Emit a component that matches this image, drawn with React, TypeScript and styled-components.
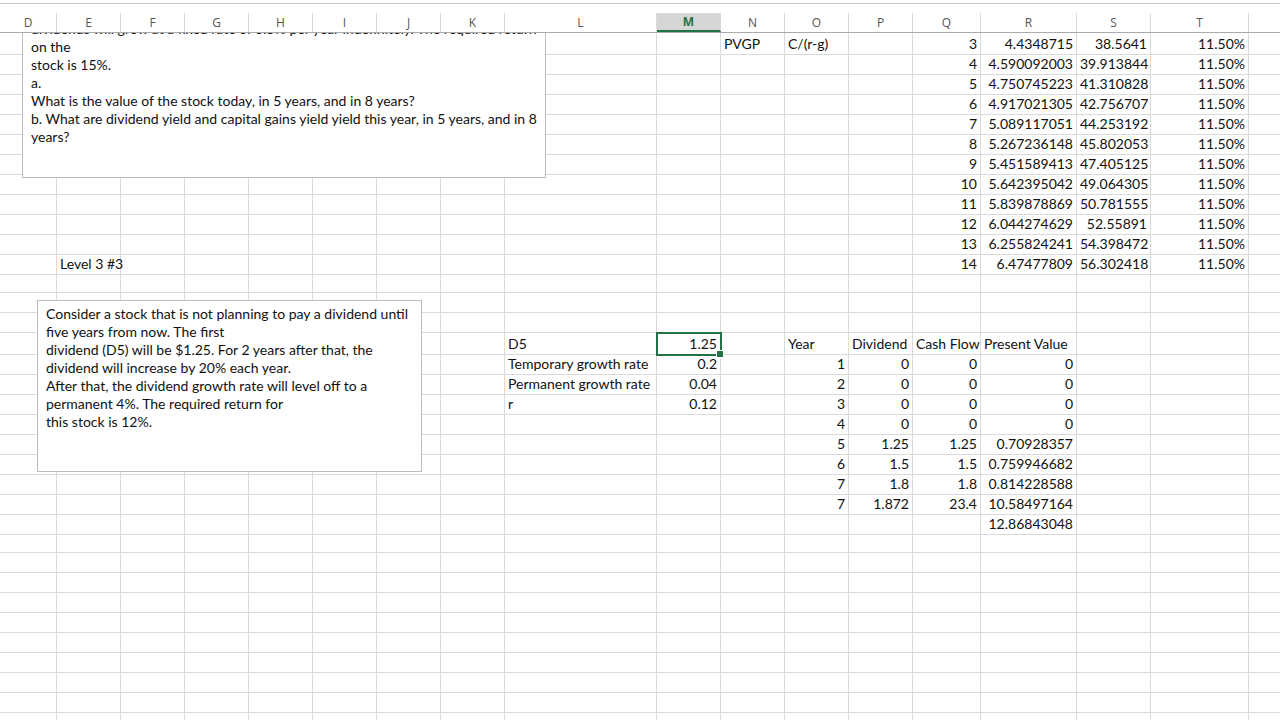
import React from "react";
import styled, { createGlobalStyle } from "styled-components";

const Global = createGlobalStyle`
  html, body { margin: 0; padding: 0; background: #fff; overflow: hidden; }
  body { font-family: Lato, "Open Sans", sans-serif; }
`;

const COLS = [
  { n: "D", w: 57 }, { n: "E", w: 64 }, { n: "F", w: 64 }, { n: "G", w: 64 },
  { n: "H", w: 64 }, { n: "I", w: 64 }, { n: "J", w: 64 }, { n: "K", w: 64 },
  { n: "L", w: 152 }, { n: "M", w: 64 }, { n: "N", w: 64 }, { n: "O", w: 64 },
  { n: "P", w: 64 }, { n: "Q", w: 68 }, { n: "R", w: 96 }, { n: "S", w: 74 },
  { n: "T", w: 98 }, { n: "", w: 40 },
];
const TEMPLATE = COLS.map((c) => `${c.w}px`).join(" ");
const NROWS = 35;

type Cell = { v: string; a?: "l" | "r" };
const data: Record<string, Cell> = {};
const put = (r: number, c: string, v: string, a: "l" | "r" = "l") => {
  data[`${r}${c}`] = { v, a };
};

put(0, "N", "PVGP");
put(0, "O", "C/(r-g)");
const rs = ["4.4348715","4.590092003","4.750745223","4.917021305","5.089117051","5.267236148","5.451589413","5.642395042","5.839878869","6.044274629","6.255824241","6.47477809"];
const ss = ["38.5641","39.913844","41.310828","42.756707","44.253192","45.802053","47.405125","49.064305","50.781555","52.55891","54.398472","56.302418"];
rs.forEach((v, i) => {
  put(i, "Q", String(i + 3), "r");
  put(i, "R", v, "r");
  put(i, "S", ss[i], "r");
  put(i, "T", "11.50%", "r");
});
put(11, "E", "Level 3 #3");
put(15, "L", "D5"); put(15, "M", "1.25", "r");
put(15, "O", "Year"); put(15, "P", "Dividend"); put(15, "Q", "Cash Flow"); put(15, "R", "Present Value");
put(16, "L", "Temporary growth rate"); put(16, "M", "0.2", "r");
put(17, "L", "Permanent growth rate"); put(17, "M", "0.04", "r");
put(18, "L", "r"); put(18, "M", "0.12", "r");
const tbl: [string, string, string, string][] = [
  ["1","0","0","0"],["2","0","0","0"],["3","0","0","0"],["4","0","0","0"],
  ["5","1.25","1.25","0.70928357"],["6","1.5","1.5","0.759946682"],["7","1.8","1.8","0.814228588"],["7","1.872","23.4","10.58497164"],
];
tbl.forEach((t, i) => {
  put(16 + i, "O", t[0], "r"); put(16 + i, "P", t[1], "r"); put(16 + i, "Q", t[2], "r"); put(16 + i, "R", t[3], "r");
});
put(24, "R", "12.86843048", "r");

const Page = styled.div`
  position: relative;
  width: 1280px;
  height: 720px;
  overflow: hidden;
  background: #fff;
`;
const TopStrip = styled.div`
  height: 3px;
  border-bottom: 1px solid #c8c8c8;
`;
const HeaderRow = styled.div`
  display: grid;
  grid-template-columns: ${TEMPLATE};
  height: 29px;
  align-items: end;
  border-bottom: 1px solid #ababab;
  box-sizing: border-box;
`;
const HeadCell = styled.div<{ $sel?: boolean }>`
  height: 19px;
  display: flex;
  align-items: center;
  justify-content: center;
  box-sizing: border-box;
  font-family: "Open Sans", sans-serif;
  font-size: 12px;
  color: ${(p) => (p.$sel ? "#217346" : "#555")};
  font-weight: ${(p) => (p.$sel ? 700 : 400)};
  background: ${(p) => (p.$sel ? "#d6d6d6" : "#fff")};
  border-right: 1px solid #dadada;
  border-bottom: ${(p) => (p.$sel ? "2px solid #217346" : "none")};
`;
const Row = styled.div`
  display: grid;
  grid-template-columns: ${TEMPLATE};
  height: 20px;
`;
const GridCell = styled.div<{ $a?: string; $sel?: boolean }>`
  position: relative;
  box-sizing: border-box;
  border-right: 1px solid #dadada;
  border-bottom: 1px solid #dadada;
  font-family: Lato, "Open Sans", sans-serif;
  font-size: 14px;
  color: #111;
  line-height: 21px;
  padding: 0 3px;
  white-space: nowrap;
  overflow: visible;
  text-align: ${(p) => (p.$a === "r" ? "right" : "left")};
  ${(p) => p.$sel && `outline: 2px solid #217346; outline-offset: -1px; z-index: 2;`}
`;
const Handle = styled.span`
  position: absolute;
  right: -4px;
  bottom: -4px;
  width: 6px;
  height: 6px;
  background: #217346;
  border: 1px solid #fff;
`;
const TextBox = styled.div<{ $x: number; $y: number; $w: number; $h: number }>`
  position: absolute;
  left: ${(p) => p.$x}px;
  top: ${(p) => p.$y}px;
  width: ${(p) => p.$w}px;
  height: ${(p) => p.$h}px;
  box-sizing: border-box;
  background: #fff;
  border: 1px solid #bdbdbd;
  padding: 4px 8px;
  font-family: Lato, "Open Sans", sans-serif;
  font-size: 14px;
  line-height: 18px;
  color: #111;
  z-index: 3;
`;
const Clip = styled.div`
  position: absolute;
  left: 0;
  top: 33px;
  width: 1280px;
  height: 687px;
  overflow: hidden;
  z-index: 3;
  pointer-events: none;
`;

export default function App() {
  return (
    <Page>
      <Global />
      <TopStrip />
      <HeaderRow>
        {COLS.map((c, i) => (
          <HeadCell key={i} $sel={c.n === "M"}>{c.n}</HeadCell>
        ))}
      </HeaderRow>
      {Array.from({ length: NROWS }).map((_, r) => (
        <Row key={r}>
          {COLS.map((c, i) => {
            const d = data[`${r}${c.n}`];
            const sel = r === 15 && c.n === "M";
            return (
              <GridCell key={i} $a={d?.a} $sel={sel}>
                {d?.v}
                {sel && <Handle />}
              </GridCell>
            );
          })}
        </Row>
      ))}
      <Clip>
        <TextBox $x={22} $y={-18} $w={524} $h={163}>
          dividends will grow at a fixed rate of 3.5% per year indefinitely. The required return<br />
          on the<br />
          stock is 15%.<br />
          a.<br />
          What is the value of the stock today, in 5 years, and in 8 years?<br />
          b. What are dividend yield and capital gains yield yield this year, in 5 years, and in 8<br />
          years?
        </TextBox>
        <TextBox $x={37} $y={267} $w={385} $h={172}>
          Consider a stock that is not planning to pay a dividend until<br />
          five years from now. The first<br />
          dividend (D5) will be $1.25. For 2 years after that, the<br />
          dividend will increase by 20% each year.<br />
          After that, the dividend growth rate will level off to a<br />
          permanent 4%. The required return for<br />
          this stock is 12%.
        </TextBox>
      </Clip>
    </Page>
  );
}
